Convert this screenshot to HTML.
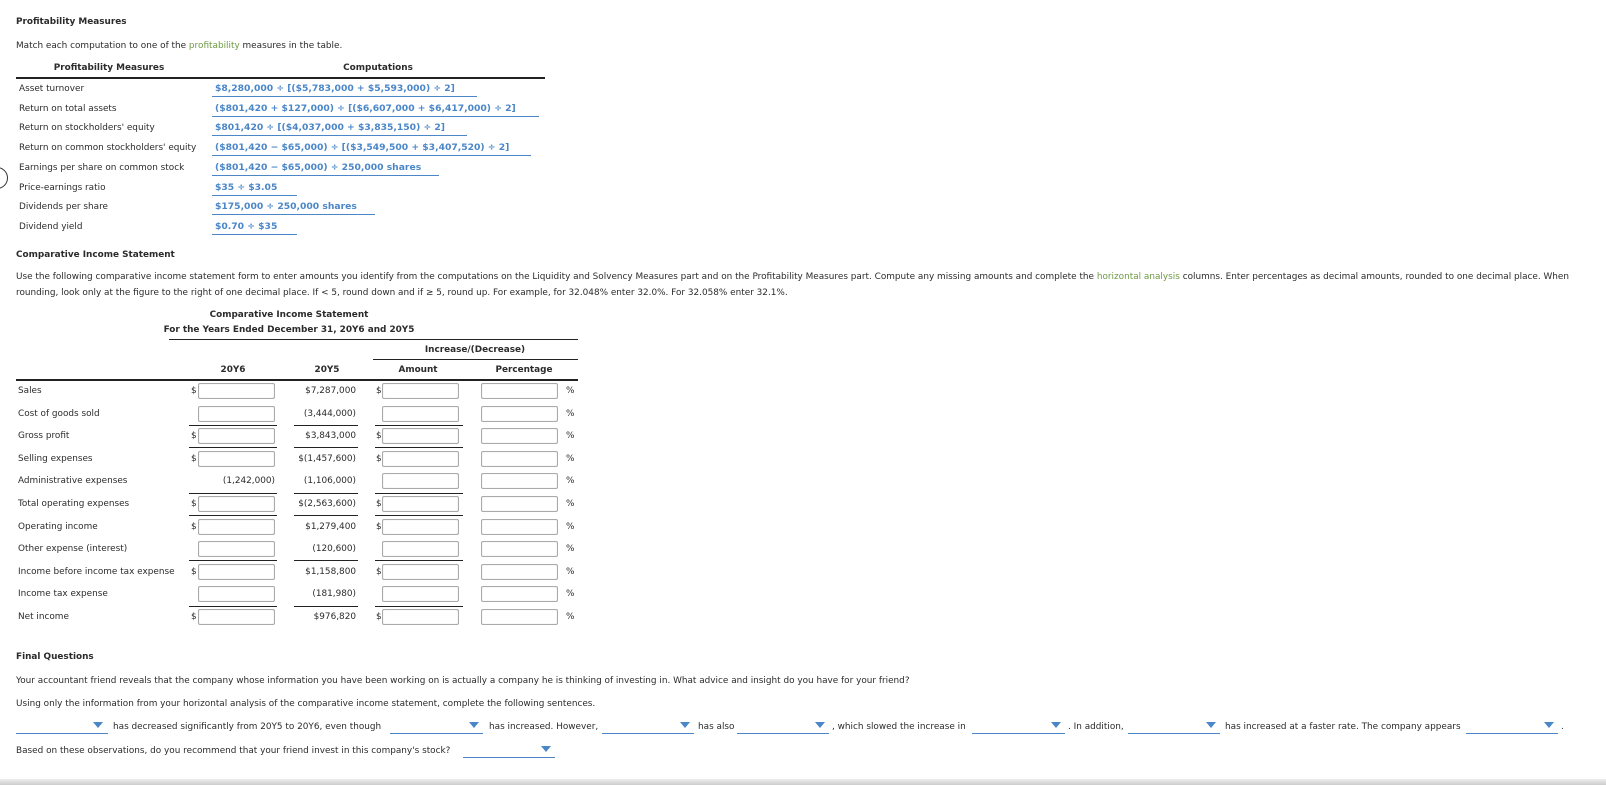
<!DOCTYPE html>
<html><head><meta charset="utf-8"><style>
*{margin:0;padding:0;box-sizing:border-box}
body{width:1606px;height:785px;position:relative;background:#fff;font-family:"DejaVu Sans","Liberation Sans",sans-serif;font-size:8.9px;color:#2b2b2b;overflow:hidden}
.a{position:absolute;white-space:nowrap;line-height:12px}
.b{font-weight:bold}
.c{color:#4a86c8;font-weight:bold;font-size:9.2px}
.u{position:absolute;height:1px;background:#4a86c8}
.k{position:absolute;height:1px;background:#222}
.in{position:absolute;width:77px;height:16px;border:1px solid #aaa;border-radius:2px;background:#fff;box-shadow:inset 0 0 1px #ccc}
.dd{position:absolute;height:1px;background:#4a86c8}
.tri{position:absolute;width:0;height:0;border-left:5px solid transparent;border-right:5px solid transparent;border-top:6px solid #4a86c8}
.r{text-align:right}
</style></head><body>
<div class="a b" style="left:16px;top:16px">Profitability Measures</div>
<div class="a" style="left:16px;top:40px">Match each computation to one of the <span style="color:#6e9a44">profitability</span> measures in the table.</div>
<div class="a b" style="left:39px;top:62px;width:140px;text-align:center">Profitability Measures</div>
<div class="a b" style="left:308px;top:62px;width:140px;text-align:center">Computations</div>
<div class="k" style="left:16px;top:77px;width:529px;height:1.5px"></div>

<div class="a" style="left:19px;top:83px">Asset turnover</div>
<div class="a c" style="left:215px;top:83px">$8,280,000 ÷ [($5,783,000 + $5,593,000) ÷ 2]</div>
<div class="u" style="left:212px;top:96px;width:265px"></div>
<div class="a" style="left:19px;top:103px">Return on total assets</div>
<div class="a c" style="left:215px;top:103px">($801,420 + $127,000) ÷ [($6,607,000 + $6,417,000) ÷ 2]</div>
<div class="u" style="left:212px;top:116px;width:327px"></div>
<div class="a" style="left:19px;top:122px">Return on stockholders' equity</div>
<div class="a c" style="left:215px;top:122px">$801,420 ÷ [($4,037,000 + $3,835,150) ÷ 2]</div>
<div class="u" style="left:212px;top:135px;width:255px"></div>
<div class="a" style="left:19px;top:142px">Return on common stockholders' equity</div>
<div class="a c" style="left:215px;top:142px">($801,420 − $65,000) ÷ [($3,549,500 + $3,407,520) ÷ 2]</div>
<div class="u" style="left:212px;top:155px;width:319px"></div>
<div class="a" style="left:19px;top:162px">Earnings per share on common stock</div>
<div class="a c" style="left:215px;top:162px">($801,420 − $65,000) ÷ 250,000 shares</div>
<div class="u" style="left:212px;top:175px;width:227px"></div>
<div class="a" style="left:19px;top:182px">Price-earnings ratio</div>
<div class="a c" style="left:215px;top:182px">$35 ÷ $3.05</div>
<div class="u" style="left:212px;top:195px;width:85px"></div>
<div class="a" style="left:19px;top:201px">Dividends per share</div>
<div class="a c" style="left:215px;top:201px">$175,000 ÷ 250,000 shares</div>
<div class="u" style="left:212px;top:214px;width:163px"></div>
<div class="a" style="left:19px;top:221px">Dividend yield</div>
<div class="a c" style="left:215px;top:221px">$0.70 ÷ $35</div>
<div class="u" style="left:212px;top:234px;width:85px"></div>
<div style="position:absolute;left:-14px;top:167px;width:22px;height:22px;border:1.5px solid #333;border-radius:50%"></div>

<div class="a b" style="left:16px;top:249px">Comparative Income Statement</div>
<div class="a" style="left:16px;top:271px">Use the following comparative income statement form to enter amounts you identify from the computations on the Liquidity and Solvency Measures part and on the Profitability Measures part. Compute any missing amounts and complete the <span style="color:#6e9a44">horizontal analysis</span> columns. Enter percentages as decimal amounts, rounded to one decimal place. When</div>
<div class="a" style="left:16px;top:287px">rounding, look only at the figure to the right of one decimal place. If &lt; 5, round down and if ≥ 5, round up. For example, for 32.048% enter 32.0%. For 32.058% enter 32.1%.</div>
<div class="a b" style="left:159px;top:309px;width:260px;text-align:center">Comparative Income Statement</div>
<div class="a b" style="left:139px;top:324px;width:300px;text-align:center">For the Years Ended December 31, 20Y6 and 20Y5</div>
<div class="k" style="left:169px;top:339px;width:409px"></div>
<div class="a b" style="left:385px;top:344px;width:180px;text-align:center">Increase/(Decrease)</div>
<div class="k" style="left:373px;top:359px;width:205px"></div>
<div class="a b" style="left:203px;top:364px;width:60px;text-align:center">20Y6</div>
<div class="a b" style="left:297px;top:364px;width:60px;text-align:center">20Y5</div>
<div class="a b" style="left:388px;top:364px;width:60px;text-align:center">Amount</div>
<div class="a b" style="left:479px;top:364px;width:90px;text-align:center">Percentage</div>
<div class="k" style="left:16px;top:379px;width:562px;height:1.5px"></div>

<div id="rows"></div>
<script>
var R=[["Sales",1,"$7,287,000",1,0],["Cost of goods sold",0,"(3,444,000)",0,0],["Gross profit",1,"$3,843,000",1,1],["Selling expenses",1,"$(1,457,600)",1,1],["Administrative expenses",2,"(1,106,000)",0,0],["Total operating expenses",1,"$(2,563,600)",1,1],["Operating income",1,"$1,279,400",1,1],["Other expense (interest)",0,"(120,600)",0,0],["Income before income tax expense",1,"$1,158,800",1,1],["Income tax expense",0,"(181,980)",0,0],["Net income",1,"$976,820",1,1]];
var h="";
for(var i=0;i<R.length;i++){var y=391+i*22.6,t=y-6;var r=R[i];
h+='<div class="a" style="left:18px;top:'+t+'px">'+r[0]+'</div>';
if(r[1]==2)h+='<div class="a r" style="left:195px;width:80px;top:'+t+'px">(1,242,000)</div>';
else{if(r[1])h+='<div class="a" style="left:191px;top:'+t+'px">$</div>';h+='<div class="in" style="left:198px;top:'+(y-8)+'px"></div>';}
h+='<div class="a r" style="left:256px;width:100px;top:'+t+'px">'+r[2]+'</div>';
if(r[3])h+='<div class="a" style="left:376px;top:'+t+'px">$</div>';
h+='<div class="in" style="left:382px;top:'+(y-8)+'px"></div>';
h+='<div class="in" style="left:481px;top:'+(y-8)+'px"></div>';
h+='<div class="a" style="left:566px;top:'+t+'px">%</div>';
if(r[4]){var ly=y-11.5;h+='<div class="k" style="left:189px;width:88px;top:'+ly+'px"></div><div class="k" style="left:294px;width:64px;top:'+ly+'px"></div><div class="k" style="left:375px;width:88px;top:'+ly+'px"></div>';}
}
document.getElementById("rows").innerHTML=h;
</script>

<div class="a b" style="left:16px;top:651px">Final Questions</div>
<div class="a" style="left:16px;top:675px">Your accountant friend reveals that the company whose information you have been working on is actually a company he is thinking of investing in. What advice and insight do you have for your friend?</div>
<div class="a" style="left:16px;top:698px">Using only the information from your horizontal analysis of the comparative income statement, complete the following sentences.</div>

<div class="dd" style="left:16px;top:733px;width:92px"></div><div class="tri" style="left:93px;top:722px"></div>
<div class="a" style="left:113px;top:721px">has decreased significantly from 20Y5 to 20Y6, even though</div>
<div class="dd" style="left:390px;top:733px;width:93px"></div><div class="tri" style="left:469px;top:722px"></div>
<div class="a" style="left:489px;top:721px">has increased. However,</div>
<div class="dd" style="left:602px;top:733px;width:92px"></div><div class="tri" style="left:680px;top:722px"></div>
<div class="a" style="left:698px;top:721px">has also</div>
<div class="dd" style="left:737px;top:733px;width:92px"></div><div class="tri" style="left:815px;top:722px"></div>
<div class="a" style="left:832px;top:721px">, which slowed the increase in</div>
<div class="dd" style="left:972px;top:733px;width:93px"></div><div class="tri" style="left:1051px;top:722px"></div>
<div class="a" style="left:1068px;top:721px">. In addition,</div>
<div class="dd" style="left:1128px;top:733px;width:92px"></div><div class="tri" style="left:1206px;top:722px"></div>
<div class="a" style="left:1225px;top:721px">has increased at a faster rate. The company appears</div>
<div class="dd" style="left:1466px;top:733px;width:92px"></div><div class="tri" style="left:1544px;top:722px"></div>
<div class="a" style="left:1561px;top:721px">.</div>

<div class="a" style="left:16px;top:745px">Based on these observations, do you recommend that your friend invest in this company's stock?</div>
<div class="dd" style="left:463px;top:757px;width:92px"></div><div class="tri" style="left:541px;top:746px"></div>

<div style="position:absolute;left:0;top:779px;width:1606px;height:6px;background:linear-gradient(#eee,#ccc)"></div>
</body></html>
